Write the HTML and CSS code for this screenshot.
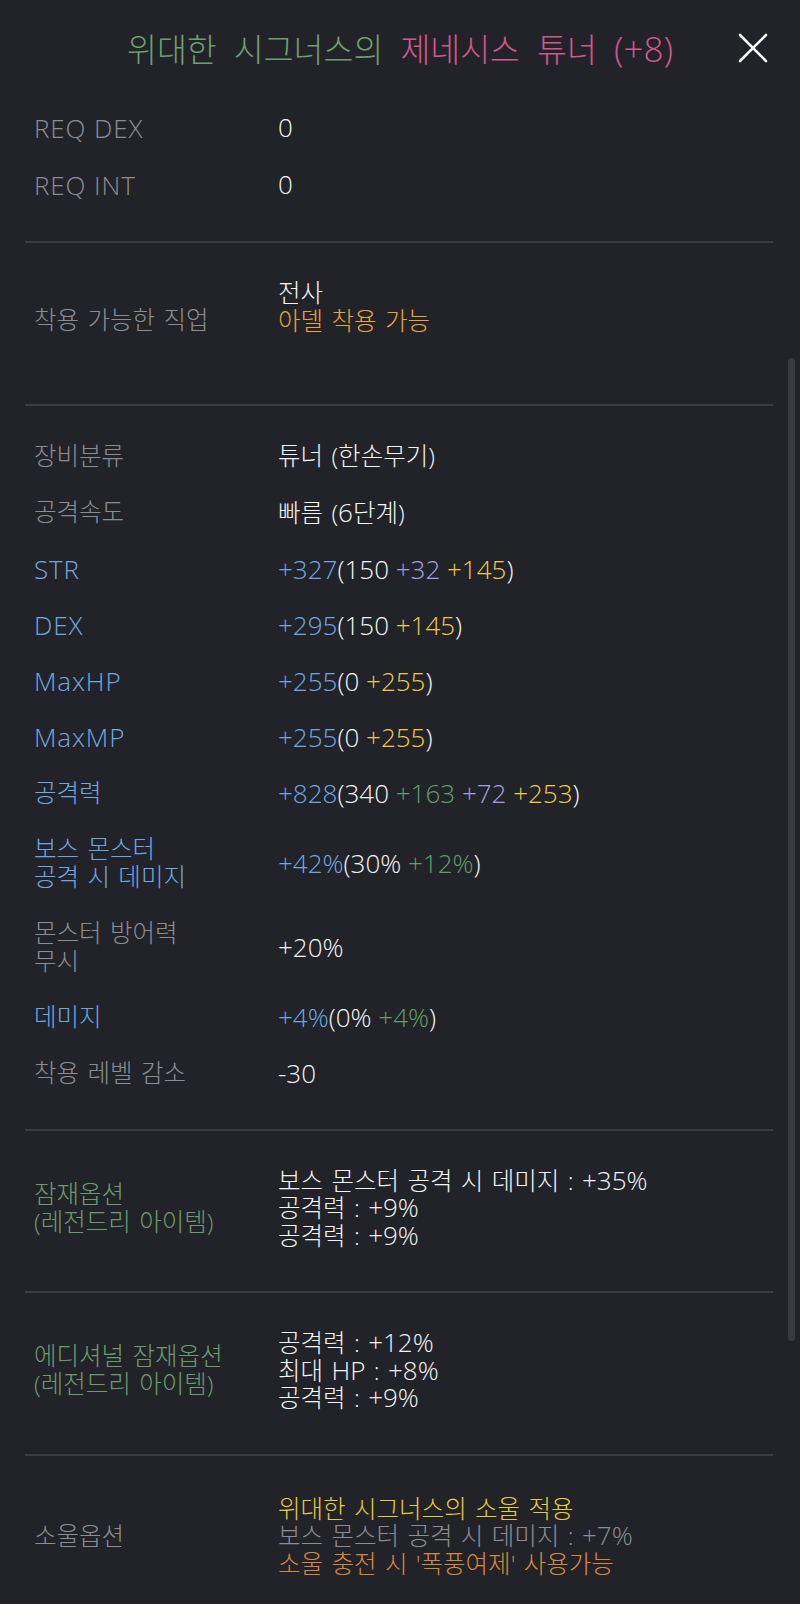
FILE: index.html
```html
<!DOCTYPE html>
<html lang="ko">
<head>
<meta charset="utf-8">
<title>아이템 정보</title>
<link rel="stylesheet" href="styles.css">
</head>
<body>
<div class="screen">
  <header class="header">
    <div></div>
    <h1 class="title"><span class="t-green">위대한 시그너스의</span> <span class="t-pink">제네시스 튜너 <span class="t-num">(+8)</span></span></h1>
    <button class="close" aria-label="닫기">
      <svg width="30" height="30" viewBox="0 0 30 30"><path d="M2 2 L28 28 M28 2 L2 28" stroke="#ffffff" stroke-width="2.6" stroke-linecap="round" fill="none"/></svg>
    </button>
  </header>

  <main class="list">
    <section class="section first">
      <div class="row"><div class="label en">REQ DEX</div><div class="value"><span class="num">0</span></div></div>
      <div class="row"><div class="label en">REQ INT</div><div class="value"><span class="num">0</span></div></div>
    </section>

    <section class="section">
      <div class="row">
        <div class="label">착용 가능한 직업</div>
        <div class="value">
          <div>전사</div>
          <div class="orange">아델 착용 가능</div>
          <div>&nbsp;</div>
        </div>
      </div>
    </section>

    <section class="section">
      <div class="row"><div class="label">장비분류</div><div class="value">튜너 (한손무기)</div></div>
      <div class="row"><div class="label">공격속도</div><div class="value">빠름 (<span class="num">6</span>단계)</div></div>
      <div class="row"><div class="label en blue">STR</div><div class="value num"><span class="blue">+327</span>(150 <span class="purple">+32</span> <span class="yellow">+145</span>)</div></div>
      <div class="row"><div class="label en blue">DEX</div><div class="value num"><span class="blue">+295</span>(150 <span class="yellow">+145</span>)</div></div>
      <div class="row"><div class="label en blue">MaxHP</div><div class="value num"><span class="blue">+255</span>(0 <span class="yellow">+255</span>)</div></div>
      <div class="row"><div class="label en blue">MaxMP</div><div class="value num"><span class="blue">+255</span>(0 <span class="yellow">+255</span>)</div></div>
      <div class="row"><div class="label blue">공격력</div><div class="value num"><span class="blue">+828</span>(340 <span class="green">+163</span> <span class="purple">+72</span> <span class="yellow">+253</span>)</div></div>
      <div class="row"><div class="label blue">보스 몬스터<br>공격 시 데미지</div><div class="value num"><span class="blue">+42%</span>(30% <span class="green">+12%</span>)</div></div>
      <div class="row"><div class="label">몬스터 방어력<br>무시</div><div class="value num">+20%</div></div>
      <div class="row"><div class="label blue">데미지</div><div class="value num"><span class="blue">+4%</span>(0% <span class="green">+4%</span>)</div></div>
      <div class="row"><div class="label">착용 레벨 감소</div><div class="value num">-30</div></div>
    </section>

    <section class="section">
      <div class="row">
        <div class="label green">잠재옵션<br>(레전드리 아이템)</div>
        <div class="value">
          <div>보스 몬스터 공격 시 데미지 : <span class="num">+35%</span></div>
          <div>공격력 : <span class="num">+9%</span></div>
          <div>공격력 : <span class="num">+9%</span></div>
        </div>
      </div>
    </section>

    <section class="section">
      <div class="row">
        <div class="label green">에디셔널 잠재옵션<br>(레전드리 아이템)</div>
        <div class="value">
          <div>공격력 : <span class="num">+12%</span></div>
          <div>최대 <span class="num">HP</span> : <span class="num">+8%</span></div>
          <div>공격력 : <span class="num">+9%</span></div>
        </div>
      </div>
    </section>

    <section class="section last">
      <div class="row">
        <div class="label">소울옵션</div>
        <div class="value">
          <div class="soul">위대한 시그너스의 소울 적용</div>
          <div class="grey">보스 몬스터 공격 시 데미지 : <span class="num">+7%</span></div>
          <div class="rust">소울 충전 시 '폭풍여제' 사용가능</div>
        </div>
      </div>
    </section>
  </main>

  <div class="scroll-thumb"></div>
</div>
</body>
</html>
```

FILE: styles.css
```css
html, body {
  margin: 0;
  padding: 0;
  background: #222328;
}

body {
  width: 800px;
  height: 1604px;
  overflow: hidden;
  font-family: "Open Sans", "Noto Sans CJK KR", sans-serif;
  font-weight: 300;
  color: #f3f3f4;
}

.screen {
  position: relative;
  width: 800px;
  height: 1604px;
  overflow: hidden;
}

.header {
  height: 96px;
  display: grid;
  grid-template-columns: 1fr auto 1fr;
  align-items: center;
}

.title {
  margin: 0;
  font-family: "Noto Sans CJK KR", sans-serif;
  font-weight: 300;
  font-size: 32.5px;
  line-height: 40px;
  word-spacing: 8px;
  white-space: nowrap;
}

.t-green { color: #6c9f71; }
.t-pink { color: #d2578b; }
.t-num {
  font-family: "Open Sans", sans-serif;
  font-size: 35px;
  word-spacing: 0;
}

.close {
  justify-self: end;
  margin-right: 32px;
  padding: 0;
  width: 30px;
  height: 30px;
  border: 0;
  background: none;
  display: flex;
}

.list {
  margin: 0 27px 0 25px;
}

.section {
  padding: 24px 0 26px;
  border-bottom: 2px solid #3c3d43;
}

.section.first {
  padding-top: 5px;
  padding-bottom: 26px;
}

.section.last {
  padding-top: 27px;
  border-bottom: 0;
}

.row {
  display: grid;
  grid-template-columns: 244px 1fr;
  align-items: center;
  padding: 12px 0 16px 9px;
  font-size: 24.5px;
  line-height: 28px;
  word-spacing: 2px;
}

.value > div {
  line-height: 27.5px;
}

.label {
  color: #8c8d93;
}

.value {
  color: #f3f3f4;
}

.en, .num {
  font-size: 26px;
  word-spacing: 0;
}

.label.en {
  letter-spacing: 0.9px;
}

.blue { color: #6ea8e2; }
.purple { color: #a99de6; }
.yellow { color: #efcb4b; }
.green { color: #5f9f6b; }
.orange { color: #e9a53c; }
.soul { color: #e5cb3c; }
.grey { color: #8c8d93; }
.rust { color: #d8883d; }

.label.blue { color: #6ea8e2; }
.label.green { color: #6a9c70; }

.scroll-thumb {
  position: absolute;
  left: 788px;
  top: 358px;
  width: 7px;
  height: 983px;
  border-radius: 4px;
  background: #3a3b41;
}
```
